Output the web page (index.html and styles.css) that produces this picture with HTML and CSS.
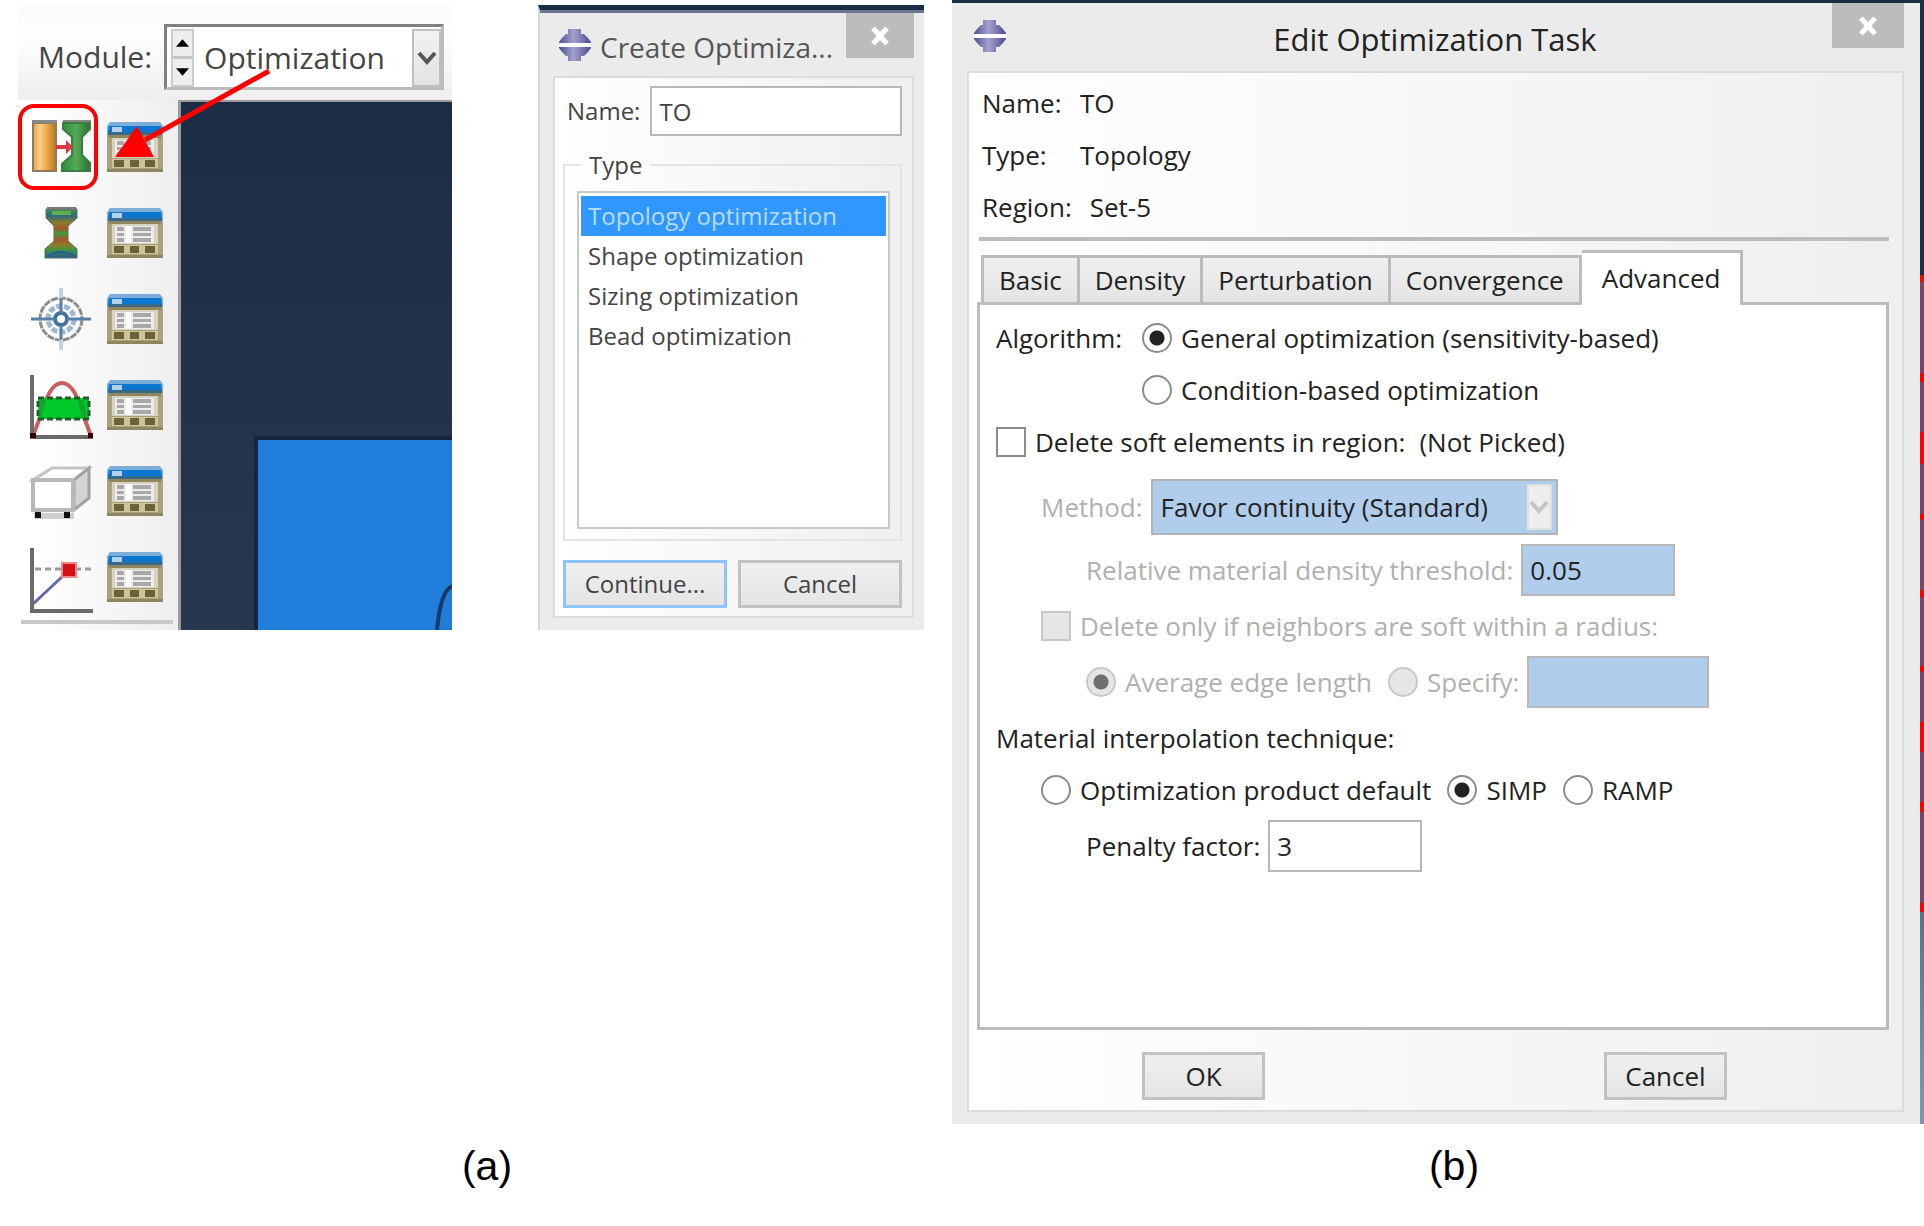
FILE: index.html
```html
<!DOCTYPE html>
<html lang="en">
    <head>
        <meta charset="UTF-8">
        <title>Optimization task</title>
        <link rel="stylesheet" href="styles.css">
    </head>
    <body>
        <!-- shared drawings -->
        <svg class="defs" aria-hidden="true">
            <defs>
                <linearGradient id="orange">
                    <stop offset="0" stop-color="#e5a04a"/>
                    <stop offset="0.3" stop-color="#fbcf8a"/>
                    <stop offset="0.6" stop-color="#ebaa48"/>
                    <stop offset="1" stop-color="#b8751f"/>
                </linearGradient>
                <linearGradient id="green">
                    <stop offset="0" stop-color="#2f8a3c"/>
                    <stop offset="0.5" stop-color="#55ab55"/>
                    <stop offset="1" stop-color="#2a6f36"/>
                </linearGradient>
                <linearGradient id="spool" x2="0" y2="1">
                    <stop offset="0" stop-color="#3c9440"/>
                    <stop offset="0.14" stop-color="#2d6a82"/>
                    <stop offset="0.28" stop-color="#8a7c28"/>
                    <stop offset="0.4" stop-color="#a5562c"/>
                    <stop offset="0.5" stop-color="#3f9c3c"/>
                    <stop offset="0.62" stop-color="#a5562c"/>
                    <stop offset="0.74" stop-color="#8a7c28"/>
                    <stop offset="0.84" stop-color="#3c9440"/>
                    <stop offset="1" stop-color="#2a5c90"/>
                </linearGradient>
                <linearGradient id="ball">
                    <stop offset="0" stop-color="#4b4f95"/>
                    <stop offset="0.45" stop-color="#a3a3cc"/>
                    <stop offset="1" stop-color="#4b4a94"/>
                </linearGradient>
            </defs>
            <symbol id="logo" viewBox="0 0 32 32">
                <path fill="url(#ball)" d="M9 0h13v5h3l4 4 3 4v1H0v-1l3-4 4-4h2zM0 18h32v1l-3 4-4 4h-3v5H9v-5H7l-4-4-3-4z"/>
                <path fill="#fff" d="M0 14h32v4H0z"/>
            </symbol>
            <symbol id="manager" viewBox="0 0 56 50">
                <path fill="#aba17c" d="M0 10h56v40H0z"/>
                <path fill="#8f8660" d="M2 13h52v3H2zM0 47h56v3H0z"/>
                <path fill="#d8d3c0" d="M5 16h46v20H5z"/>
                <path fill="#ececec" d="M8 18h39v17H8z"/>
                <path fill="#fff" d="M19 18h5v17h-5z"/>
                <path fill="#a8a8a8" d="M10 19h7v4h-7zM10 25h7v3h-7zM10 30h7v4h-7zM26 19h18v4H26zM26 25h18v3H26zM26 30h18v4H26z"/>
                <path fill="#cdc49a" d="M5 37h46v9H5z"/>
                <path fill="#6c6238" d="M7 38h10v7H7zM23 38h9v7h-9zM38 38h10v7H38z"/>
                <path fill="#7badd8" d="M3 0h50l3 4v9H0V4z"/>
                <path fill="#0a76d0" d="M2 4h52l1 6H1z"/>
                <path fill="#376a88" d="M1 10h54v3H1z"/>
                <path fill="#b6d0ea" d="M5 5h10v5H5z"/>
            </symbol>
            <symbol id="chevron" viewBox="0 0 20 16">
                <path fill="none" stroke="currentColor" stroke-width="4" d="M2 3l8 9 8-9"/>
            </symbol>
        </svg>

        <main class="figures">
            <figure class="figure">
                <div class="pair">
                    <section class="module">
                        <div class="module_bar">
                            <label for="module">Module:</label>
                            <div class="combo">
                                <div class="spin">
                                    <button aria-label="Previous"><svg viewBox="0 0 14 8"><path d="M7 0l7 8H0z"/></svg></button>
                                    <button aria-label="Next"><svg viewBox="0 0 14 8"><path d="M7 8l7-8H0z"/></svg></button>
                                </div>
                                <select id="module"><option>Optimization</option></select>
                                <span class="drop"><svg><use href="#chevron"/></svg></span>
                            </div>
                        </div>
                        <div class="workspace">
                            <div class="toolbox">
                                <button class="tool tool_active" aria-label="Create optimization task">
                                    <svg viewBox="0 0 80 86">
                                        <path fill="url(#orange)" stroke="#8e7a5c" stroke-width="2" d="M15 19h23v48H15z"/>
                                        <path fill="#888" d="M14 16h25v3H14zM45 16h28v3H45z"/>
                                        <path fill="url(#green)" stroke="#3a7c44" stroke-width="2" d="M45 19h27v6l-8 8v18l8 8v8H44v-7l10-9V33l-9-8z"/>
                                        <path fill="#d83a44" d="M38 41h10v-5l7 7-7 7v-5H38z"/>
                                    </svg>
                                </button>
                                <button class="tool" aria-label="Task manager"><svg class="manager"><use href="#manager"/></svg></button>
                                <button class="tool" aria-label="Create design response">
                                    <svg viewBox="0 0 80 86">
                                        <path fill="url(#spool)" stroke="#55705a" stroke-width="1" d="M28 19h31v9l-9 8v15l9 8v9H27v-9l9-8V36l-8-8z"/>
                                        <path fill="#777" d="M29 17h29v3H29z"/>
                                        <path fill="#62ad52" d="M34 21h19v4H34z"/>
                                        <path fill="none" stroke="#2a5c90" stroke-width="2" d="M30 66q13-8 26 0"/>
                                    </svg>
                                </button>
                                <button class="tool" aria-label="Design response manager"><svg class="manager"><use href="#manager"/></svg></button>
                                <button class="tool" aria-label="Create objective function">
                                    <svg viewBox="0 0 80 86">
                                        <g fill="none">
                                            <circle cx="43" cy="43" r="21" stroke="#8c8c8c" stroke-width="3" stroke-dasharray="7 1"/>
                                            <circle cx="43" cy="43" r="13" stroke="#9fb9d2" stroke-width="5" stroke-dasharray="6 2"/>
                                            <circle cx="43" cy="43" r="6" stroke="#44719c" stroke-width="4"/>
                                            <path stroke="#5580a8" stroke-width="3" d="M13 43h24M49 43h24M43 23v14M43 49v14"/>
                                            <path stroke="#c3d2e0" stroke-width="4" d="M43 12v10M43 64v10"/>
                                        </g>
                                    </svg>
                                </button>
                                <button class="tool" aria-label="Objective function manager"><svg class="manager"><use href="#manager"/></svg></button>
                                <button class="tool" aria-label="Create constraint">
                                    <svg viewBox="0 0 80 86">
                                        <path fill="none" stroke="#c9605f" stroke-width="4" d="M15 74l9-24Q32 21 44 21t20 29l9 24"/>
                                        <path fill="#00c92c" stroke="#225c26" stroke-width="3" stroke-dasharray="6 3" d="M20 36h51v21H20z"/>
                                        <path fill="#16a32c" d="M22 38h6l-5 17h-1zM60 38h5l4 17h-5z"/>
                                        <path fill="none" stroke="#6a6a6a" stroke-width="4" d="M14 13v62h61"/>
                                        <path fill="#300" d="M12 71h6v5h-6zM70 71h5v5h-5z"/>
                                    </svg>
                                </button>
                                <button class="tool" aria-label="Constraint manager"><svg class="manager"><use href="#manager"/></svg></button>
                                <button class="tool" aria-label="Create geometric restriction">
                                    <svg viewBox="0 0 80 86">
                                        <path fill="#fff" stroke="#c4c4c4" stroke-width="3" d="M15 32l19-12h37L56 32z"/>
                                        <path fill="#d4d4d4" stroke="#a2a2a2" stroke-width="3" d="M56 32l15-12v30L56 62z"/>
                                        <path fill="#fff" stroke="#b8b8b8" stroke-width="4" d="M15 32h40v30H15z"/>
                                        <path fill="#cfcfcf" d="M16 65h40v6H16z"/>
                                        <path fill="#111" d="M17 64h6v6h-6zM46 64h6v6h-6z"/>
                                    </svg>
                                </button>
                                <button class="tool" aria-label="Geometric restriction manager"><svg class="manager"><use href="#manager"/></svg></button>
                                <button class="tool" aria-label="Create stop condition">
                                    <svg viewBox="0 0 80 86">
                                        <path fill="none" stroke="#9a9a9a" stroke-width="3" stroke-dasharray="6 4" d="M17 35h58"/>
                                        <path stroke="#6468ac" stroke-width="3" d="M15 70l32-30"/>
                                        <path fill="#d60f14" stroke="#ee8888" stroke-width="2" d="M44 29h14v14H44z"/>
                                        <path fill="none" stroke="#6a6a6a" stroke-width="4" d="M14 14v63h61"/>
                                    </svg>
                                </button>
                                <button class="tool" aria-label="Stop condition manager"><svg class="manager"><use href="#manager"/></svg></button>
                                <hr class="toolbox_line">
                            </div>
                            <div class="viewport">
                                <div class="part">
                                    <svg class="part_edge" viewBox="0 0 17 46"><path d="M2 46C4 24 8 6 17 2"/></svg>
                                </div>
                            </div>
                        </div>
                        <svg class="arrow" viewBox="0 0 160 92" aria-hidden="true">
                            <path stroke="#f00" stroke-width="5" d="M154 2L30 71"/>
                            <path fill="#f00" d="M22 57L0 88h39z"/>
                        </svg>
                    </section>

                    <section class="dialog dialog_create">
                        <header class="titlebar">
                            <svg class="logo"><use href="#logo"/></svg>
                            <h2 class="title">Create Optimiza...</h2>
                            <button class="close" aria-label="Close"><svg viewBox="0 0 20 18"><path d="M3 1l14 16M17 1L3 17"/></svg></button>
                        </header>
                        <div class="client">
                            <div class="name_row">
                                <label for="name">Name:</label>
                                <input class="text" id="name" value="TO">
                            </div>
                            <fieldset class="group">
                                <legend>Type</legend>
                                <select class="list" size="8" aria-label="Type">
                                    <option selected>Topology optimization</option>
                                    <option>Shape optimization</option>
                                    <option>Sizing optimization</option>
                                    <option>Bead optimization</option>
                                </select>
                            </fieldset>
                            <div class="actions">
                                <button class="btn btn_default">Continue...</button>
                                <button class="btn">Cancel</button>
                            </div>
                        </div>
                    </section>
                </div>
                <figcaption>(a)</figcaption>
            </figure>

            <figure class="figure">
                <div class="backdrop">
                    <section class="dialog dialog_edit">
                        <header class="titlebar">
                            <svg class="logo"><use href="#logo"/></svg>
                            <h2 class="title">Edit Optimization Task</h2>
                            <button class="close" aria-label="Close"><svg viewBox="0 0 20 18"><path d="M3 1l14 16M17 1L3 17"/></svg></button>
                        </header>
                        <div class="client">
                            <dl class="summary">
                                <div><dt>Name:</dt><dd>TO</dd></div>
                                <div><dt>Type:</dt><dd>Topology</dd></div>
                                <div><dt>Region:</dt><dd>Set-5</dd></div>
                            </dl>
                            <hr class="line">
                            <div class="tabs" role="tablist">
                                <button class="tab" role="tab">Basic</button>
                                <button class="tab" role="tab">Density</button>
                                <button class="tab" role="tab">Perturbation</button>
                                <button class="tab" role="tab">Convergence</button>
                                <button class="tab tab_active" role="tab" aria-selected="true">Advanced</button>
                            </div>
                            <div class="panel" role="tabpanel">
                                <div class="algorithm">
                                    <span class="algorithm_label">Algorithm:</span>
                                    <label class="row"><input type="radio" name="algorithm" checked>General optimization (sensitivity-based)</label>
                                    <label class="row"><input type="radio" name="algorithm">Condition-based optimization</label>
                                </div>
                                <div class="row">
                                    <label class="choice"><input type="checkbox">Delete soft elements in region:</label>
                                    <span class="picked">(Not Picked)</span>
                                </div>
                                <div class="row row_method indent disabled">
                                    <label for="method">Method:</label>
                                    <div class="method">
                                        <select id="method" disabled><option>Favor continuity (Standard)</option></select>
                                        <span class="drop"><svg><use href="#chevron"/></svg></span>
                                    </div>
                                </div>
                                <div class="row row_field indent_more disabled">
                                    <label for="threshold">Relative material density threshold:</label>
                                    <input class="text" id="threshold" value="0.05" disabled>
                                </div>
                                <div class="row indent disabled">
                                    <label class="choice"><input type="checkbox" disabled>Delete only if neighbors are soft within a radius:</label>
                                </div>
                                <div class="row row_field indent_more disabled">
                                    <label class="choice"><input type="radio" name="radius" checked disabled>Average edge length</label>
                                    <label class="choice choice_next"><input type="radio" name="radius" disabled>Specify:</label>
                                    <input class="text text_wide" aria-label="Radius" disabled>
                                </div>
                                <div class="row">Material interpolation technique:</div>
                                <div class="row indent">
                                    <label class="choice"><input type="radio" name="technique">Optimization product default</label>
                                    <label class="choice choice_next"><input type="radio" name="technique" checked>SIMP</label>
                                    <label class="choice choice_next"><input type="radio" name="technique">RAMP</label>
                                </div>
                                <div class="row row_field indent_more">
                                    <label for="penalty">Penalty factor:</label>
                                    <input class="text" id="penalty" value="3">
                                </div>
                            </div>
                            <div class="actions">
                                <button class="btn">OK</button>
                                <button class="btn">Cancel</button>
                            </div>
                        </div>
                    </section>
                </div>
                <figcaption>(b)</figcaption>
            </figure>
        </main>
    </body>
</html>
```

FILE: styles.css
```css
* {
    box-sizing: border-box;
}
body {
    margin: 0;
    background-color: white;
    color: #222;
    font-family: "Open Sans", "Noto Sans", sans-serif;
    font-size: 26px;
    line-height: 36px;
}
button, input, select {
    font: inherit;
    color: inherit;
    margin: 0;
    padding: 0;
    border: none;
    border-radius: 0;
    background: none;
}
select {
    appearance: none;
}
label, .row, legend {
    white-space: nowrap;
}
.defs {
    position: absolute;
    width: 0;
    height: 0;
}

/*  FIGURES  */
.figures {
    display: grid;
    grid-template-columns: minmax(0, 906fr) minmax(0, 972fr);
    grid-template-rows: auto auto;
    column-gap: 28px;
    padding-left: 18px;
}
.figure {
    display: grid;
    grid-row: span 2;
    grid-template-columns: minmax(0, 1fr);
    grid-template-rows: subgrid;
    margin: 0;
}
figcaption {
    padding: 18px 0 30px 32px;
    font-family: "Liberation Sans", Arial, sans-serif;
    font-size: 41px;
    line-height: 48px;
    color: black;
    text-align: center;
}
.pair {
    display: grid;
    grid-template-columns: minmax(0, 434fr) minmax(0, 386fr);
    align-self: start;
    column-gap: 86px;
    padding-top: 5px;
}

/*  MODULE PANEL  */
.module {
    position: relative;
    display: flex;
    flex-direction: column;
}
.module_bar {
    display: flex;
    align-items: center;
    gap: 12px;
    height: 95px;
    padding: 8px 8px 0 20px;
    font-size: 30px;
    color: #444;
    background: linear-gradient(#fafafa, #fff 30%, #eee);
}
.combo {
    flex: 1;
    display: flex;
    height: 66px;
    padding: 2px 0 0 4px;
    border: 3px solid #bbb;
    border-top-color: #808080;
    border-left-color: #808080;
    background-color: white;
}
.combo select {
    flex: 1;
    min-width: 0;
    padding-left: 10px;
}
.spin {
    display: flex;
    flex-direction: column;
    width: 23px;
    background-color: #eee;
    border: 2px solid #ccc;
}
.spin button {
    flex: 1;
    display: flex;
    align-items: center;
    justify-content: center;
}
.spin button + button {
    border-top: 3px solid #c4c4c4;
}
.spin svg {
    width: 13px;
    height: 8px;
}
.drop {
    display: flex;
    align-items: center;
    justify-content: center;
    pointer-events: none;
}
.drop svg {
    width: 20px;
    height: 16px;
}
.combo .drop {
    width: 29px;
    border: 2px solid #bfbfbf;
    background: linear-gradient(#f2f2f2, #e2e2e2);
    color: #555;
}
.workspace {
    flex: 1;
    display: flex;
}
.toolbox {
    display: grid;
    grid-template-columns: 80px 74px;
    grid-template-rows: repeat(6, 86px) 4px;
    align-content: start;
    width: 160px;
    padding: 4px 0 5px;
    background: linear-gradient(to right, #fff 10%, #eee);
}
.tool {
    display: flex;
    align-items: center;
    justify-content: center;
}
.tool svg {
    width: 80px;
    height: 86px;
}
.tool .manager {
    width: 56px;
    height: 50px;
}
.tool_active {
    border: 4px solid red;
    border-radius: 16px;
}
.tool_active svg {
    flex: none;
}
.toolbox_line {
    grid-column: span 2;
    width: 152px;
    height: 4px;
    margin: 0 3px;
    border: none;
    background-color: #c8c8c8;
}
.viewport {
    flex: 1;
    display: flex;
    padding: 334px 0 0 73px;
    border-top: 2px solid #999;
    border-left: 3px solid #999;
    background: linear-gradient(#1b2c45, #203149 45%, #283750);
    overflow: hidden;
}
.part {
    flex: 1;
    display: flex;
    align-items: flex-end;
    justify-content: flex-end;
    border-top: 4px solid #16253a;
    border-left: 4px solid #16253a;
    background-color: #207dd9;
}
.part_edge {
    width: 17px;
    height: 46px;
    fill: none;
    stroke: #153a63;
    stroke-width: 4;
}
.arrow {
    position: absolute;
    left: 97px;
    top: 64px;
    width: 160px;
    height: 92px;
}

/*  DIALOGS  */
.dialog {
    display: flex;
    flex-direction: column;
    background-color: #ebebeb;
}
.titlebar {
    display: flex;
    align-items: flex-start;
}
.title {
    margin: 0;
    font-weight: normal;
    white-space: nowrap;
}
.logo {
    flex: none;
    width: 32px;
    height: 32px;
}
.close {
    flex: none;
    display: flex;
    align-items: center;
    justify-content: center;
    height: 45px;
    background-color: #bcbcbc;
}
.close svg {
    width: 20px;
    height: 18px;
    fill: none;
    stroke: white;
    stroke-width: 5;
}
.client {
    flex: 1;
    border: 2px solid #dcdcdc;
    background: linear-gradient(to right, #fff, #efefef);
}
.text {
    min-width: 0;
    border: 2px solid #b8b8b8;
    background-color: white;
}
.btn {
    height: 48px;
    border: 3px solid #c2c2c2;
    background: linear-gradient(#f0f0f0, #e4e4e4);
}

/*  CREATE DIALOG  */
.dialog_create {
    padding: 0 10px 12px 13px;
    border-top: 5px solid #1b2c45;
    border-left: 2px solid #d6d6d6;
    box-shadow: inset 0 3px #6b7890;
    font-size: 24px;
    color: #444;
}
.dialog_create .titlebar {
    height: 66px;
    padding: 3px 0 0 6px;
}
.dialog_create .logo {
    margin-top: 16px;
}
.dialog_create .title {
    flex: 1;
    padding: 16px 0 0 9px;
    font-size: 28px;
    line-height: 36px;
    color: #555;
}
.dialog_create .close {
    width: 68px;
}
.dialog_create .client {
    padding: 8px 10px 8px 8px;
}
.name_row {
    display: flex;
    align-items: center;
    gap: 10px;
    padding-left: 4px;
}
.name_row .text {
    flex: 1;
    height: 50px;
    padding-left: 7px;
}
.group {
    min-width: 0;
    margin: 11px 0 19px;
    padding: 8px 10px 10px 12px;
    border: 2px solid #e4e4e4;
}
.group legend {
    margin-left: 4px;
    padding: 0 8px;
}
.list {
    display: block;
    width: 100%;
    height: 338px;
    padding: 3px 2px;
    border: 2px solid #c8c8c8;
    background-color: white;
    overflow: hidden;
}
.list option {
    height: 40px;
    padding: 3px 7px 0;
    line-height: 40px;
    color: #444;
}
.list option:checked {
    color: #b8dcff;
    background: #3097ff linear-gradient(#3097ff, #3097ff);
}
.dialog_create .actions {
    display: grid;
    grid-template-columns: 1fr 1fr;
    gap: 11px;
}
.btn_default {
    border-color: #8fc4fb;
}

/*  EDIT DIALOG  */
.backdrop {
    padding-right: 4px;
    background: linear-gradient(#1b2c45 275px, #f00 275px 282px, #7b4569 282px 373px, #f00 373px 382px, #7b4569 382px 432px, #f00 432px 464px, #7b4569 464px 514px, #f00 514px 520px, #7b4569 520px 590px, #f00 590px 597px, #7b4569 597px 666px, #f00 666px 672px, #7b4569 672px 722px, #f00 722px 752px, #7b4569 752px 802px, #f00 802px 812px, #7b4569 812px 903px, #f00 903px 912px, #5d7186 912px, #8098ae);
}
.dialog_edit {
    padding: 0 16px 12px 15px;
    border-top: 3px solid #1b2c45;
}
.dialog_edit .titlebar {
    height: 68px;
    padding-left: 7px;
}
.dialog_edit .logo {
    margin-top: 17px;
}
.dialog_edit .title {
    flex: 1;
    padding: 14px 0 0 32px;
    font-size: 31px;
    line-height: 44px;
    text-align: center;
}
.dialog_edit .close {
    width: 72px;
}
.dialog_edit .client {
    padding: 4px 13px 10px 8px;
}
.summary {
    margin: 0;
    padding-left: 5px;
}
.summary div {
    display: flex;
    align-items: center;
    gap: 18px;
    height: 52px;
}
.summary dt {
    min-width: 80px;
}
.summary dd {
    margin: 0;
}
.line {
    height: 4px;
    margin: 4px 0 9px 2px;
    border: none;
    background-color: #bcbcbc;
}
.tabs {
    display: flex;
    align-items: flex-end;
    height: 55px;
    padding-left: 4px;
}
.tab {
    height: 50px;
    padding: 0 15px;
    border: 3px solid #bcbcbc;
    border-left-width: 0;
    background: linear-gradient(#f0f0f0, #e4e4e4);
}
.tab:first-child {
    border-left-width: 3px;
}
.tab_active {
    position: relative;
    height: 55px;
    padding: 0 20px 3px;
    border-bottom: none;
    background: white;
}
.panel {
    margin-top: -3px;
    padding: 7px 16px 151px;
    border: 3px solid #bcbcbc;
    background-color: white;
}
.row, .choice {
    display: flex;
    align-items: center;
}
.row {
    height: 52px;
}
.algorithm {
    display: grid;
    grid-template-columns: 146px 1fr;
}
.algorithm_label {
    line-height: 52px;
}
.algorithm .row {
    grid-column: 2;
}
.picked {
    margin-left: 14px;
}
.indent {
    margin-left: 45px;
}
.indent_more {
    margin-left: 90px;
}
.row_field {
    gap: 8px;
    margin-top: 4px;
    margin-bottom: 4px;
}
.row_field .text {
    width: 154px;
    height: 52px;
    padding-left: 7px;
}
.row_field .text_wide {
    width: 182px;
}
.row_method {
    gap: 8px;
    height: 56px;
    margin-top: 11px;
    margin-bottom: 9px;
}
.choice_next {
    margin-left: 16px;
}
.row_field .choice_next {
    margin-left: 8px;
}
.disabled {
    color: #b0b0b0;
}
.disabled .text {
    color: #222;
    background-color: #b0ceec;
}
.method {
    display: flex;
    width: 407px;
    height: 56px;
    padding: 3px 4px;
    border: 2px solid #b0b4b8;
    background-color: #b0ceec;
}
.method select {
    flex: 1;
    min-width: 0;
    padding-left: 4px;
    color: #222;
    opacity: 1;
}
.method .drop {
    width: 25px;
    border: 2px solid #e0e0e0;
    background-color: #eee;
    color: #c4c4c4;
}
input[type="radio"], input[type="checkbox"] {
    appearance: none;
    flex: none;
    width: 30px;
    height: 30px;
    margin-right: 9px;
    border: 2px solid #8c8c8c;
    background-color: white;
}
input[type="radio"] {
    border-radius: 50%;
}
input[type="radio"]:checked {
    background-image: radial-gradient(circle, #222 7px, transparent 8px);
}
input[type="radio"]:disabled, input[type="checkbox"]:disabled {
    border-color: #c8c8c8;
    background-color: #e6e6e6;
}
input[type="radio"]:checked:disabled {
    background-image: radial-gradient(circle, #707070 7px, transparent 8px);
}
.dialog_edit .actions {
    display: flex;
    justify-content: space-between;
    padding: 22px 162px 0 165px;
}
.dialog_edit .btn {
    width: 123px;
}
```
